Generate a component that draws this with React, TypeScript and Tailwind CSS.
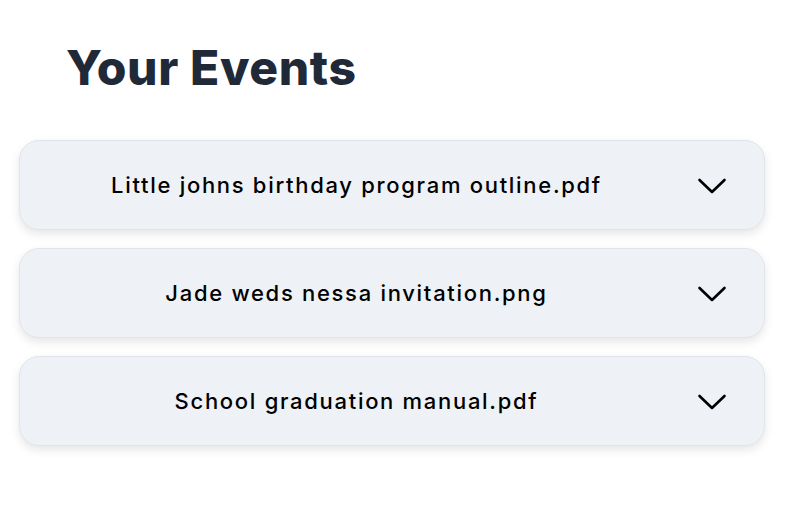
import React from "react";

const items = [
  "Little johns birthday program outline.pdf",
  "Jade weds nessa invitation.png",
  "School graduation manual.pdf",
];

function Chevron() {
  return (
    <svg width="30" height="18" viewBox="0 0 30 18" fill="none" className="mt-[2px]">
      <path d="M2.5 3 L15 15 L27.5 3" stroke="#000" strokeWidth="2.6" strokeLinecap="round" strokeLinejoin="round" />
    </svg>
  );
}

export default function App() {
  return (
    <div className="w-[788px] h-[532px] bg-white" style={{ fontFamily: "Inter, 'Noto Sans', sans-serif" }}>
      <h1 className="pl-[66px] pt-[40px] text-[48px] leading-[56px] font-extrabold text-[#1f2937] tracking-[0.6px]">
        Your Events
      </h1>
      <div className="mt-[44px] ml-[19px] w-[746px] flex flex-col gap-[18px]">
        {items.map((t) => (
          <div
            key={t}
            className="h-[90px] rounded-[20px] border border-[#e1e4e9] bg-[#eef1f6] shadow-[0_4px_10px_rgba(0,0,0,0.10)] flex items-center pl-[40px] pr-[37px]"
          >
            <div className="flex-1 text-center text-[22px] font-medium text-black tracking-[1.7px] pr-[44px]">{t}</div>
            <Chevron />
          </div>
        ))}
      </div>
    </div>
  );
}
